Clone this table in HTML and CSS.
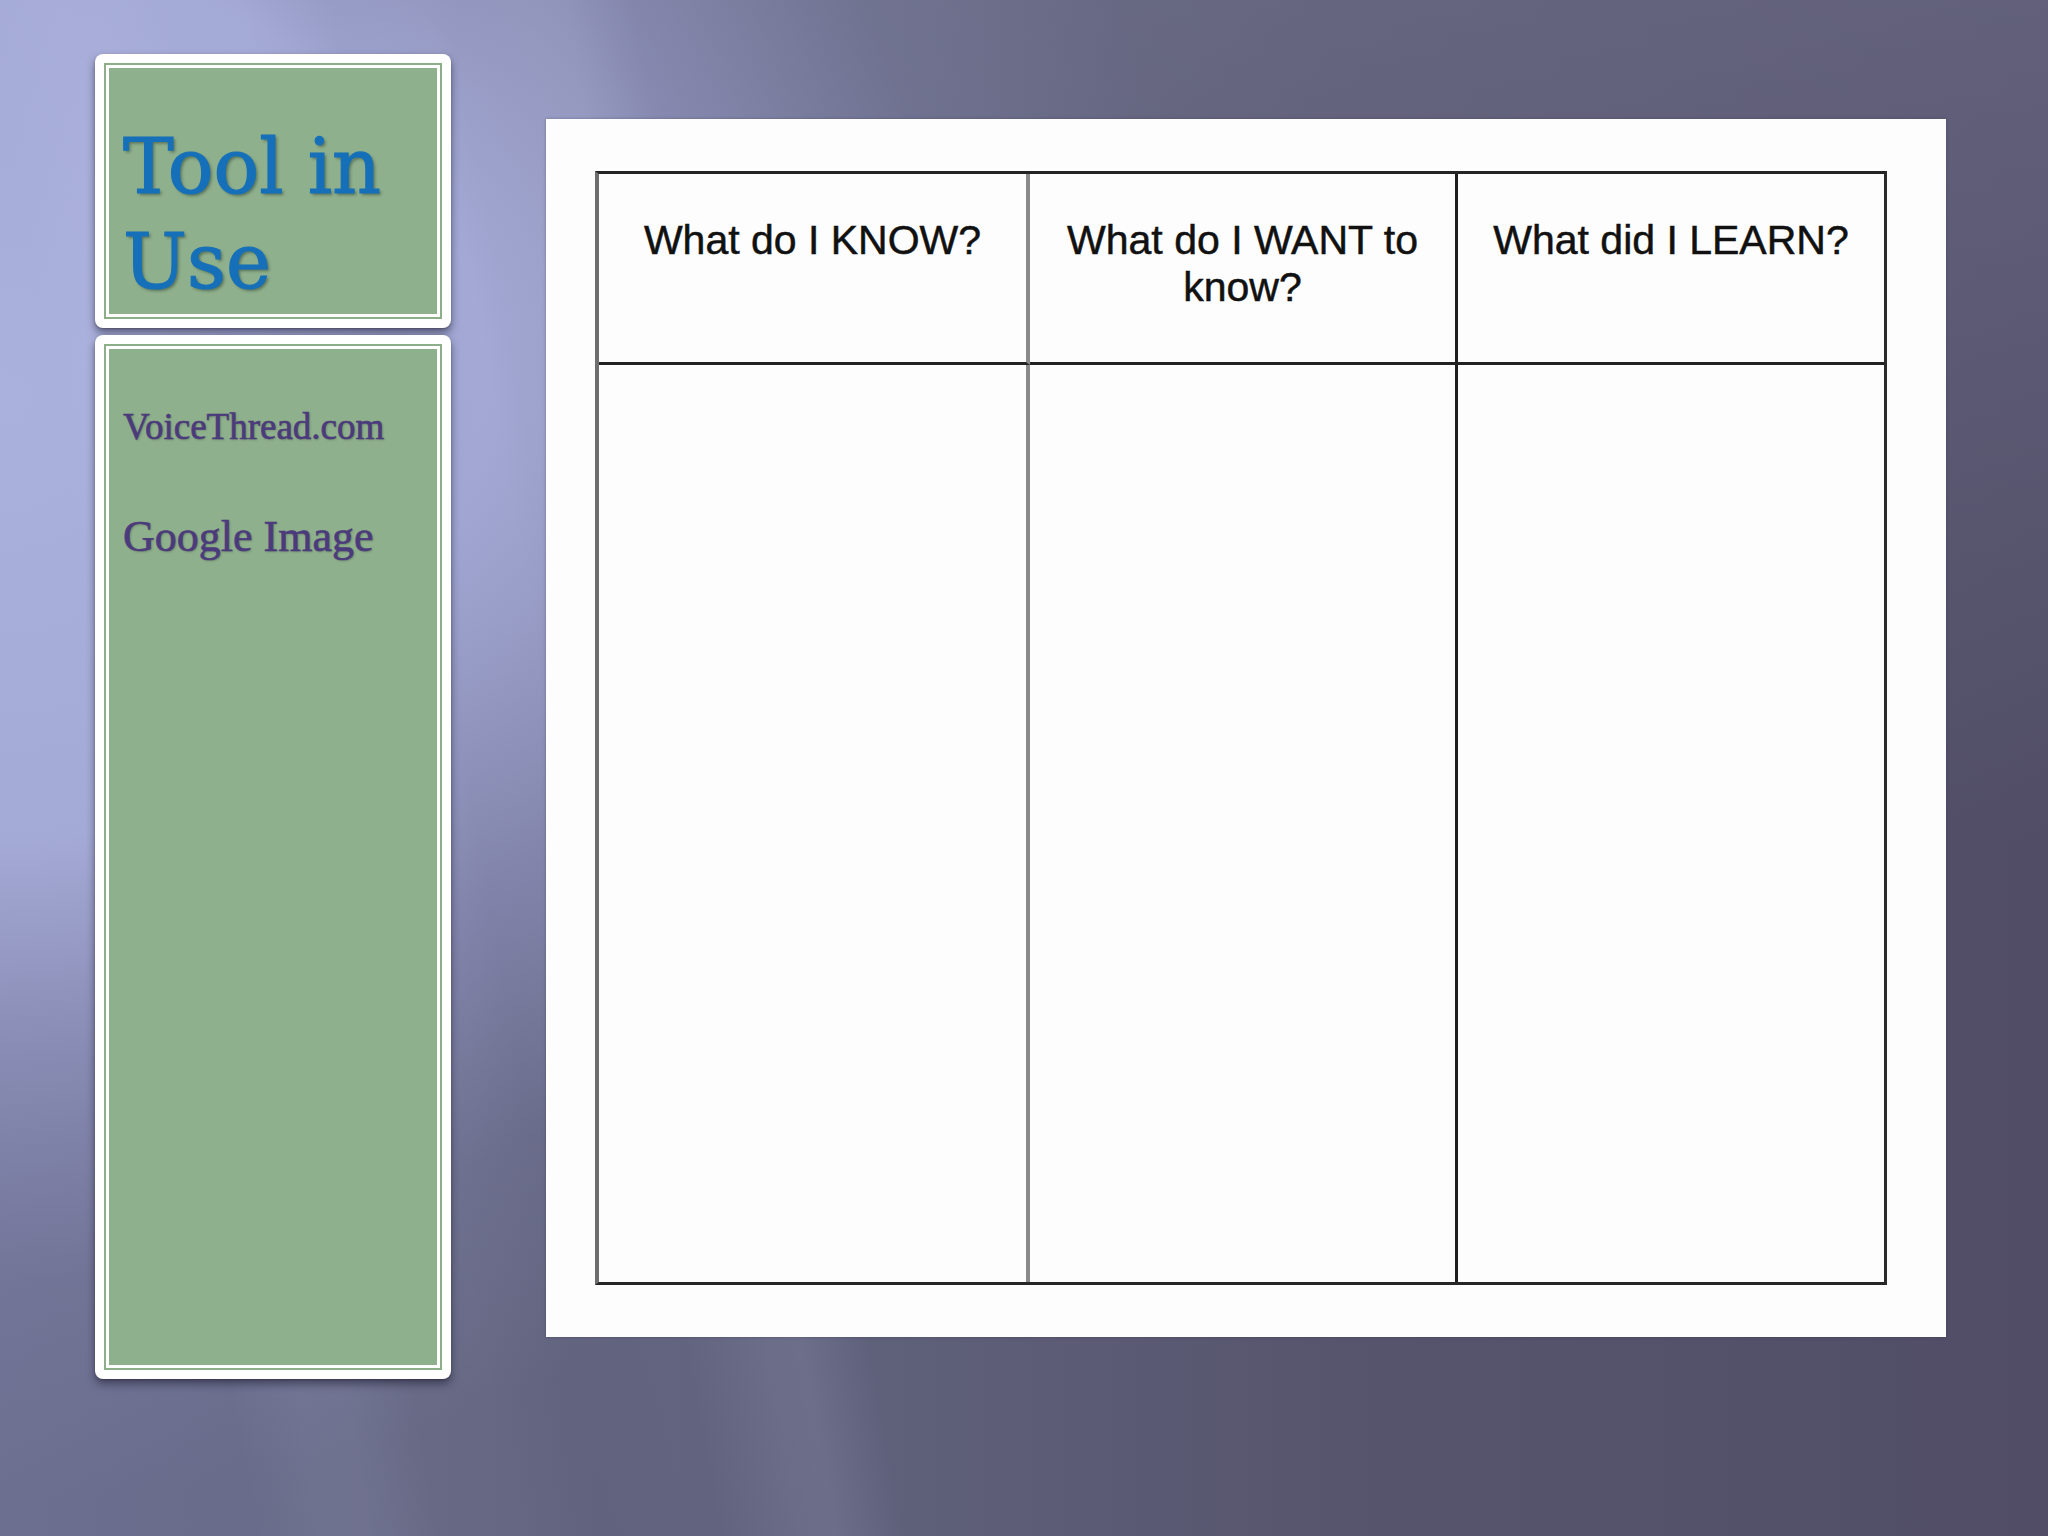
FILE: index.html
```html
<!DOCTYPE html>
<html lang="en">
<head>
<meta charset="utf-8">
<title>Tool in Use</title>
<link rel="stylesheet" href="styles.css">
</head>
<body>
<div class="slide">
  <div class="side">
    <div class="card card-title">
      <div class="ring">
        <div class="fill fill-title">
          <h1 class="title">Tool in Use</h1>
        </div>
      </div>
    </div>
    <div class="card card-body">
      <div class="ring">
        <div class="fill fill-body">
          <p class="item item-voice">VoiceThread.com</p>
          <p class="item item-google">Google Image</p>
        </div>
      </div>
    </div>
  </div>
  <div class="panel">
    <div class="kwl">
      <div class="cell head c1">What do I KNOW?</div>
      <div class="cell head c2">What do I WANT to know?</div>
      <div class="cell head c3">What did I LEARN?</div>
      <div class="cell c1"></div>
      <div class="cell c2"></div>
      <div class="cell c3"></div>
    </div>
  </div>
</div>
</body>
</html>
```

FILE: styles.css
```css
html, body {
  margin: 0;
  padding: 0;
}

body {
  width: 2048px;
  height: 1536px;
  overflow: hidden;
  font-family: "Liberation Serif", "Times New Roman", serif;
}

.slide {
  width: 2048px;
  height: 1536px;
  box-sizing: border-box;
  display: flex;
  align-items: flex-start;
  padding-left: 95px;
  background-color: #57556e;
  background-image:
    linear-gradient(80deg, rgba(255,255,255,0) 31%, rgba(200,205,240,0.10) 34.5%, rgba(200,205,240,0.12) 36%, rgba(255,255,255,0) 39%),
    linear-gradient(80deg, rgba(255,255,255,0) 11%, rgba(200,205,240,0.07) 14%, rgba(200,205,240,0.07) 16%, rgba(255,255,255,0) 19%),
    linear-gradient(80deg, rgba(255,255,255,0) 22%, rgba(40,40,70,0.05) 26%, rgba(255,255,255,0) 30%),
    radial-gradient(ellipse 1200px 1100px at 0px 400px, rgba(171,177,221,1) 0%, rgba(166,172,216,0.97) 40%, rgba(146,149,192,0.72) 60%, rgba(125,128,165,0.35) 80%, rgba(110,112,145,0) 100%),
    linear-gradient(180deg, rgba(125,128,155,0.38) 0%, rgba(125,128,155,0) 55%),
    linear-gradient(90deg, #6c6f90 0%, #666883 25%, #5e5f79 45%, #57556e 65%, #514d67 100%);
}

/* ---------- left cards ---------- */
.side {
  display: flex;
  flex-direction: column;
  gap: 7px;
  padding-top: 54px;
  width: 356px;
}

.card {
  background: #ffffff;
  border-radius: 8px;
  padding: 9px;
  box-sizing: border-box;
  display: flex;
  box-shadow: 0 5px 9px rgba(30, 28, 50, 0.55), 0 1px 2px rgba(30, 28, 50, 0.3);
}

.card-title {
  height: 274px;
}

.card-body {
  height: 1044px;
}

.ring {
  flex: 1;
  display: flex;
  border: 2px solid #8caf8a;
  padding: 3px;
  background: #ffffff;
}

.fill {
  flex: 1;
  background: #8fb08c;
  padding-left: 14px;
}

.fill-title {
  padding-top: 51px;
}

.title {
  margin: 0;
  font-family: "DejaVu Serif", "Liberation Serif", serif;
  font-weight: normal;
  font-size: 76px;
  line-height: 95px;
  color: #1670b9;
  -webkit-text-stroke: 1.2px #1670b9;
  text-shadow: 2px 2px 3px rgba(20, 40, 30, 0.45);
  width: 290px;
}

.fill-body {
  padding-top: 56px;
}

.item {
  margin: 0;
  font-family: "Liberation Serif", "Times New Roman", serif;
  color: #4b3a7c;
  -webkit-text-stroke: 0.6px #4b3a7c;
  line-height: 1.2;
  text-shadow: 1px 1px 2px rgba(20, 40, 30, 0.3);
}

.item-voice {
  font-size: 37px;
  margin-bottom: 62px;
}

.item-google {
  font-size: 44px;
}

/* ---------- right panel ---------- */
.panel {
  margin-top: 119px;
  margin-left: 95px;
  width: 1400px;
  height: 1218px;
  box-sizing: border-box;
  background: #fdfdfe;
  padding: 52px 0 0 49px;
  box-shadow: 0 0 3px rgba(40, 40, 60, 0.35);
}

.kwl {
  width: 1292px;
  height: 1114px;
  box-sizing: border-box;
  display: grid;
  grid-template-columns: 431px 428px 1fr;
  grid-template-rows: 191px 1fr;
  border-top: 3px solid #242424;
  border-right: 3px solid #2a2a2a;
  border-bottom: 3px solid #262626;
  border-left: 4px solid #6e6e6e;
}

.cell {
  box-sizing: border-box;
}

.cell.c1 {
  border-right: 4px solid #8a8a8a;
}

.cell.c2 {
  border-right: 3px solid #1e1e1e;
}

.head {
  border-bottom: 3px solid #222222;
  padding: 43px 24px 0;
  text-align: center;
  font-family: "Liberation Sans", Arial, sans-serif;
  font-size: 41px;
  line-height: 47px;
  color: #111111;
  -webkit-text-stroke: 0.5px #111111;
}
```
